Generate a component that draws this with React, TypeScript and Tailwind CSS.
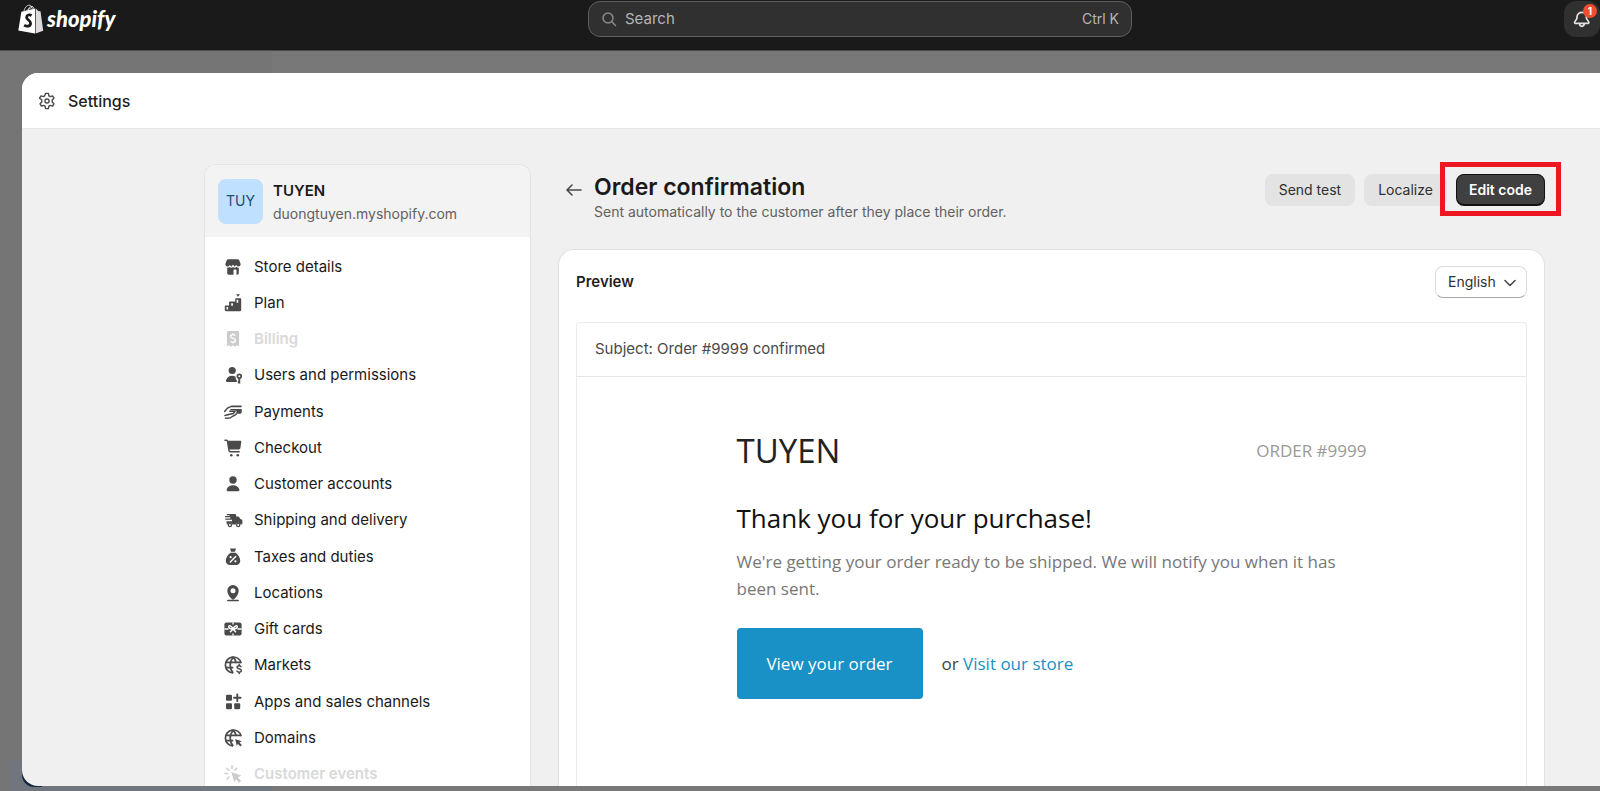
import React from 'react';

interface NavItem {
  label: string;
  icon: React.ReactNode;
  disabled?: boolean;
}

const Icon: React.FC<{ children: React.ReactNode }> = ({ children }) => (
  <svg viewBox="0 0 20 20" className="w-5 h-5 shrink-0" fill="currentColor" aria-hidden="true">
    {children}
  </svg>
);

const Globe = () => (
  <g fill="none" stroke="currentColor" strokeWidth="1.7">
    <path d="M18.2 8.2A8 8 0 1 0 10 18" />
    <path d="M10.600 2c-2.200 2.200-3.400 5-3.400 8s1 5.800 3 8M10 2c2 1.800 3 3.900 3.300 6.200" />
    <path d="M2.700 7.300h15M2.700 12.700h7.600" />
  </g>
);

const navItems: NavItem[] = [
  {
    label: 'Store details',
    icon: (
      <Icon>
        <path d="M5.200 2.300h9.600c.6 0 1.100.3 1.300.8l1.400 3.400c.5 1.400-.3 3-2 3-1.100 0-1.800-.6-2.200-1.400-.5 0-1 1.400-1.700 1.400S10.500 7.800 10 7.800s-.8 1.700-1.600 1.700S7.200 8 6.700 8c-.4.900-1.100 1.500-2.200 1.500-1.700 0-2.500-1.600-2-3l1.400-3.400c.2-.5.7-.8 1.300-.8z" />
        <path d="M4.200 10.700c1 0 1.900-.3 2.500-.8.800 1 2.500 1 3.300 0 .8 1 2.500 1 3.300 0 .6.5 1.500.8 2.500.8v5.600c0 .8-.6 1.400-1.400 1.400h-.9v-4.200c0-.5-.4-.9-.9-.9h-1.200c-.5 0-.9.400-.9.900v4.200H5.600c-.8 0-1.400-.6-1.400-1.400z" />
      </Icon>
    ),
  },
  {
    label: 'Plan',
    icon: (
      <Icon>
        <path d="M13 1.200h4l-2 2.600z" />
        <path
          fillRule="evenodd"
          d="M13.200 5.200h4c.6 0 1 .4 1 1v10.800c0 .7-.5 1.200-1.200 1.200H3c-.7 0-1.200-.5-1.200-1.200v-3.600c0-.6.4-1 1-1h3.300v-2.800c0-.6.4-1 1-1h5.100V6.200c0-.6.4-1 1-1zM3.500 13.900v2.500h1.600v-2.500zM8.200 10.300v2.500h1.700v-2.500zM13.600 6.800v3h1.700v-3z"
        />
      </Icon>
    ),
  },
  {
    label: 'Billing',
    disabled: true,
    icon: (
      <Icon>
        <path d="M5.500 2h9c.9 0 1.600.7 1.600 1.600v14l-2-1.400-2 1.600-2.100-1.600-2.100 1.600-2-1.600-2 1.400v-14C3.900 2.700 4.600 2 5.500 2z" />
        <path
          d="M12.300 6.600c-.5-.7-1.400-1-2.300-1-1.300 0-2.400.7-2.400 1.900 0 2.700 4.800 1.100 4.800 3.700 0 1.300-1.100 2-2.400 2-1 0-2-.4-2.500-1.200M10 4.200v1.400M10 13.200v1.400"
          fill="none"
          stroke="#fff"
          strokeWidth="1.400"
        />
      </Icon>
    ),
  },
  {
    label: 'Users and permissions',
    icon: (
      <Icon>
        <circle cx="9.200" cy="5.500" r="3.600" />
        <path d="M9 10.700c1.500 0 2.700.4 3.600 1-.1 1.600.3 2.800 1.300 3.600v1.700H4.200c-.9 0-1.500-.8-1.200-1.700.9-2.700 3.200-4.600 6-4.600z" />
        <circle cx="16.300" cy="11.300" r="1.900" fill="none" stroke="currentColor" strokeWidth="1.700" />
        <path d="M16.300 13v5.500M16.300 17.300h-1.500" fill="none" stroke="currentColor" strokeWidth="1.900" />
      </Icon>
    ),
  },
  {
    label: 'Payments',
    icon: (
      <Icon>
        <path d="M8.400 3.500h10.200v1.700H6.700c.4-.9 1-1.700 1.700-1.700zM7.500 6.900h11.200v3.200c0 .9-.7 1.600-1.600 1.600h-4.700l1-1.400c.6-1-.1-2.100-1.300-2H7.200z" />
        <path
          d="M1.700 9.500C3 7.500 4.500 5.300 6.700 5.200M6.800 9.300l5.300-.2-1.800 2.400-3.500.8-4.800 1.100M2.600 16.300c3.600.4 5.200-.2 7.500-2.300l3.100-1.700"
          fill="none"
          stroke="currentColor"
          strokeWidth="1.500"
          strokeLinecap="round"
        />
      </Icon>
    ),
  },
  {
    label: 'Checkout',
    icon: (
      <Icon>
        <path d="M4.200 2.800h13c.7 0 1.200.6 1.100 1.300l-.9 6c-.1.800-.7 1.300-1.500 1.300H6.300z" />
        <path d="M2 2.300h1.500c.6 0 .9.400 1 .9l1.500 9.200c.1.900.7 1.400 1.500 1.400h8.700" fill="none" stroke="currentColor" strokeWidth="1.500" strokeLinecap="round" />
        <circle cx="8.300" cy="17.200" r="1.300" />
        <circle cx="14.800" cy="17.200" r="1.300" />
      </Icon>
    ),
  },
  {
    label: 'Customer accounts',
    icon: (
      <Icon>
        <circle cx="10" cy="6" r="3.700" />
        <path d="M10 11.200c3 0 5.300 1.400 6.300 4 .4 1-.4 2.100-1.500 2.100H5.200c-1.100 0-1.900-1.100-1.500-2.100 1-2.600 3.300-4 6.300-4z" />
      </Icon>
    ),
  },
  {
    label: 'Shipping and delivery',
    icon: (
      <Icon>
        <path d="M4.300 4h7.500c.8 0 1.400.6 1.400 1.400v1h1.700c.6 0 1.100.3 1.400.8l1 1.700 1.400.7c.5.300.7.700.7 1.200v2.500c0 .7-.6 1.300-1.300 1.300h-.5a2.500 2.500 0 0 0-4.800 0H9.300a2.500 2.500 0 0 0-4.800 0h-.6l-.5-3.400H9V9.700H2.300V8.500h5V7.200H2V6h4.600V5.200H3.800C3.400 4.800 3.700 4 4.300 4z" />
        <circle cx="6.900" cy="15" r="1.600" fill="none" stroke="currentColor" strokeWidth="1.300" />
        <circle cx="15.200" cy="15" r="1.600" fill="none" stroke="currentColor" strokeWidth="1.300" />
      </Icon>
    ),
  },
  {
    label: 'Taxes and duties',
    icon: (
      <Icon>
        <path d="M7 1.500h6l-.8 2.200v1.100H7.800V3.700z" />
        <path d="M7.300 5.700h5.400c2.500 1.900 4.500 5 4.500 8.100 0 3-2.400 4.300-4.400 4.300H7.200c-2 0-4.400-1.300-4.400-4.300 0-3.100 2-6.200 4.500-8.100z" />
        <path d="M7.300 15l5.400-5.600" stroke="#fff" strokeWidth="1.400" strokeLinecap="round" />
        <circle cx="7.600" cy="10.200" r="1.100" fill="#fff" />
        <circle cx="12.400" cy="14.300" r="1.100" fill="#fff" />
      </Icon>
    ),
  },
  {
    label: 'Locations',
    icon: (
      <Icon>
        <path fillRule="evenodd" d="M10 2a5.700 5.700 0 0 1 5.700 5.700c0 3.600-2.500 6.300-4.500 8.300-.7.700-1.700.7-2.400 0-2-2-4.500-4.700-4.500-8.300A5.700 5.700 0 0 1 10 2zm0 3.200a2.500 2.500 0 1 0 0 5 2.500 2.500 0 0 0 0-5z" />
        <path d="M4.800 17.600h10.400" stroke="currentColor" strokeWidth="1.500" strokeLinecap="round" />
      </Icon>
    ),
  },
  {
    label: 'Gift cards',
    icon: (
      <Icon>
        <path d="M3.500 3.500h13c1.200 0 2.100.8 2.100 2v9c0 1.200-.9 2-2.100 2h-13c-1.200 0-2.100-.8-2.100-2v-9c0-1.200.9-2 2.100-2z" />
        <path d="M1.500 10h4M14.500 10h4M10 3.500v2M10 14.500v2" stroke="#fff" strokeWidth="1.300" />
        <path
          d="M10 9.800C8.500 6.600 5.800 6 5.700 7.700c0 1.500 2.300 2.100 4.300 2.100 2 0 4.300-.6 4.300-2.100-.1-1.700-2.800-1.100-4.300 2.100zM9.700 10.200l-2.600 3M10.300 10.200l2.600 3"
          fill="none"
          stroke="#fff"
          strokeWidth="1.500"
        />
      </Icon>
    ),
  },
  {
    label: 'Markets',
    icon: (
      <Icon>
        <Globe />
        <path
          d="M18 11.600c-.4-.6-1.100-.9-1.900-.9-1.200 0-2 .6-2 1.500 0 2.200 4.200 1.100 4.200 3.300 0 1-.9 1.700-2.100 1.700-1 0-1.800-.4-2.200-1.100M16.200 9.300v1.400M16.200 17.200v1.400"
          fill="none"
          stroke="currentColor"
          strokeWidth="1.500"
          strokeLinecap="round"
        />
      </Icon>
    ),
  },
  {
    label: 'Apps and sales channels',
    icon: (
      <Icon>
        <rect x="3" y="2.800" width="6" height="6" rx="1.100" />
        <rect x="3" y="11.200" width="6" height="6" rx="1.100" />
        <rect x="11.200" y="11.200" width="6" height="6" rx="1.100" />
        <path d="M14.300 2.500v6.600M11 5.800h6.600" stroke="currentColor" strokeWidth="1.900" strokeLinecap="round" />
      </Icon>
    ),
  },
  {
    label: 'Domains',
    icon: (
      <Icon>
        <Globe />
        <path d="M12.200 11l6.500 2.200-2.300 1.200 2.400 2.700-1.500 1.400-2.400-2.700-1.100 2.300z" />
      </Icon>
    ),
  },
  {
    label: 'Customer events',
    disabled: true,
    icon: (
      <Icon>
        <path d="M8.300 8l10 3.500-3.500 2 3.300 3.500-2 1.800-3.200-3.500-1.500 3.200z" />
        <path d="M9 1.800v2.700M3.800 4.200l2 2M2 9.500h2.700M4 15l2-2M13.800 4.200l-1.900 2" stroke="currentColor" strokeWidth="1.500" strokeLinecap="round" />
      </Icon>
    ),
  },
];

const Logo: React.FC = () => (
  <a href="#home" aria-label="Shopify" className="flex items-center gap-[3px] text-white">
    <svg viewBox="0 0 26 30" className="w-[26px] h-[30px]" aria-hidden="true">
      <path d="M3.400 7.700L17.200 4.400 17 29.600.3 26.500z" fill="#fff" />
      <path d="M17.900 4.600l2.300 2.300 2.300.3 2.700 19.600-7.600 2.600z" fill="#dcdcdc" />
      <path
        d="M5.800 8.500C6.200 4 8.700 1.200 11.300 1.200c2.100 0 3.100 2.500 3.100 5M9.700 7.500c.5-3.600 2.500-5.400 4.300-5.200 1.300.2 1.900 1.700 2.100 3.200M7.800 7.200l6-4"
        fill="none"
        stroke="#d4d4d4"
        strokeWidth="1"
      />
      <path
        d="M13.600 11.400c-2.200-1.200-4.900-.4-5 1.900-.1 2.600 4.200 2.900 4 6-.2 3-3.700 3.800-6.400 1.800"
        fill="none"
        stroke="#1a1a1a"
        strokeWidth="2.800"
      />
    </svg>
    <span className="font-['Lato',sans-serif] text-[22px] leading-8 font-black italic">shopify</span>
  </a>
);

const TopBar: React.FC = () => (
  <header className="relative h-[51px] shrink-0 flex items-start bg-[#1a1a1a] border-b border-[#4a4a4a] pl-[18px]">
    <div className="w-[570px] shrink-0 pt-[3px]">
      <Logo />
    </div>
    <label className="flex-1 min-w-0 h-9 mt-px flex items-center gap-2 rounded-xl border border-[#5e5e5e] bg-[#303030] px-3 text-[15px] text-[#b5b5b5]">
      <svg viewBox="0 0 16 16" className="w-4 h-4 text-[#8a8a8a]" fill="none" stroke="currentColor" strokeWidth="1.500" strokeLinecap="round" aria-hidden="true">
        <circle cx="7" cy="7" r="5" />
        <path d="M10.800 10.800l3.700 3.700" />
      </svg>
      <input
        type="text"
        aria-label="Search"
        placeholder="Search"
        className="flex-1 min-w-0 bg-transparent outline-none placeholder:text-[#b5b5b5]"
      />
      <kbd className="font-[Inter,sans-serif] text-sm">Ctrl K</kbd>
    </label>
    <div className="w-[468px] shrink-0 flex justify-end">
      <button type="button" aria-label="Notifications" className="relative w-9 h-9 mt-px rounded-xl bg-[#303030] text-[#e3e3e3] flex items-center justify-center">
        <svg viewBox="0 0 20 20" className="w-5 h-5" fill="none" stroke="currentColor" strokeWidth="1.700" strokeLinejoin="round" aria-hidden="true">
          <path d="M10 3.300c2.500 0 4.300 1.900 4.400 4.300l.1 2 2.200 3.300c.5.700 0 1.500-.8 1.500H3.500c-.8 0-1.300-.8-.8-1.500l2.200-3.300.1-2c.2-2.400 2.300-4.300 5-4.300z" />
          <path d="M7.600 14.600c0 3.600 4.600 3.600 4.600 0" />
        </svg>
        <span className="absolute top-[3px] right-[3px] w-[14px] h-[14px] rounded-full bg-[#ef4d2f] text-white text-[10px] leading-[14px] font-bold text-center">1</span>
      </button>
    </div>
  </header>
);

const Sidebar: React.FC = () => (
  <aside className="w-[327px] shrink-0 rounded-t-xl border border-b-0 border-[#e3e3e3] bg-white overflow-hidden">
    <div className="flex items-center gap-[10px] bg-[#f3f3f3] h-[72px] px-[13px]">
      <div className="w-[45px] h-[45px] rounded-lg bg-[#bfe0ff] text-[#1d4e73] text-sm flex items-center justify-center">TUY</div>
      <div className="pt-px">
        <p className="text-[15px] leading-6 font-semibold text-[#1a1a1a]">TUYEN</p>
        <p className="text-sm leading-[22px] text-[#616161]">duongtuyen.myshopify.com</p>
      </div>
    </div>
    <nav className="pt-3 px-[18px]">
      <ul>
        {navItems.map((item) => (
          <li key={item.label} className="nth-[4n]:mb-px">
            <a
              href="#settings"
              aria-disabled={item.disabled}
              className={`flex items-center gap-[11px] h-9 text-[15px] ${
                item.disabled ? 'text-[#cccccc] font-semibold' : 'text-[#4a4a4a]'
              }`}
            >
              {item.icon}
              <span className={item.disabled ? 'text-[#d9d9d9]' : 'text-[#1a1a1a]'}>{item.label}</span>
            </a>
          </li>
        ))}
      </ul>
    </nav>
  </aside>
);

const PageHeader: React.FC = () => (
  <div className="flex items-start gap-3 pt-[9px] pl-2">
    <button type="button" aria-label="Back" className="mt-[7px] text-[#4a4a4a]">
      <svg viewBox="0 0 16 20" className="w-4 h-5" fill="none" stroke="currentColor" strokeWidth="1.600" strokeLinecap="round" strokeLinejoin="round" aria-hidden="true">
        <path d="M15 10H1M6 5l-5 5 5 5" />
      </svg>
    </button>
    <div className="flex-1">
      <h1 className="text-[23px] leading-7 font-semibold text-[#1a1a1a]">Order confirmation</h1>
      <p className="text-sm leading-[22px] text-[#616161]">Sent automatically to the customer after they place their order.</p>
    </div>
    <div className="flex gap-[9px] pt-px text-sm">
      <button type="button" className="h-8 px-[14px] rounded-lg bg-[#e3e3e3] text-[#303030]">Send test</button>
      <button type="button" className="h-8 px-[14px] rounded-lg bg-[#e3e3e3] text-[#303030]">Localize</button>
      <div className="relative">
        <button type="button" className="h-8 px-3 rounded-lg border border-b-2 border-[#111111] bg-[#404040] text-white font-semibold">
          Edit code
        </button>
        <div className="absolute -top-3 -bottom-[10px] -left-4 -right-4 border-[5px] border-[#ee1620] pointer-events-none" />
      </div>
    </div>
  </div>
);

const EmailPreview: React.FC = () => (
  <div className="flex-1 rounded-t border border-b-0 border-[#ebebeb]">
    <p className="h-[54px] flex items-center px-[18px] border-b border-[#e6e6e6] text-[15px] text-[#4a4a4a]">
      Subject: Order #9999 confirmed
    </p>
    <div className="w-[630px] mx-auto pt-[50px] font-['Open_Sans',sans-serif]">
      <div className="flex items-center justify-between">
        <h2 className="text-[33px] leading-[47px] text-[#222222]">TUYEN</h2>
        <span className="text-[17px] text-[#999999]">ORDER #9999</span>
      </div>
      <h3 className="mt-6 text-[26px] leading-10 text-[#111111]">Thank you for your purchase!</h3>
      <p className="mt-[10px] text-[17px] leading-[27px] text-[#777777]">
        We're getting your order ready to be shipped. We will notify you when it has been sent.
      </p>
      <div className="mt-[26px] flex items-center gap-[19px] text-[17px] text-[#444444]">
        <a href="#order" className="w-[186px] h-[71px] rounded bg-[#1990c6] text-white flex items-center justify-center">
          View your order
        </a>
        <p>
          or <a href="#store" className="text-[#1990c6]">Visit our store</a>
        </p>
      </div>
    </div>
  </div>
);

export default function App() {
  return (
    <div className="relative h-screen flex flex-col overflow-hidden bg-[#787878] font-[Inter,sans-serif] antialiased">
      {/* dimmed admin page behind the settings sheet */}
      <div className="absolute left-0 top-0 bottom-0 w-[272px] bg-[#757575]">
        <div className="absolute left-[9px] right-0 bottom-0 h-8 rounded-tl-lg bg-[#70757e]" />
        <div className="absolute left-[22px] bottom-1 w-5 h-5 rounded-bl-xl bg-[#12293d]" />
      </div>

      <TopBar />

      <div className="relative flex-1 min-h-0 mt-[22px] mb-[5px] ml-[22px] flex flex-col rounded-l-2xl bg-[#f0f0f0] overflow-hidden">
        <div className="h-14 shrink-0 flex items-center gap-3 pl-4 bg-white border-b border-[#e8e8e8]">
          <svg viewBox="0 0 20 20" className="w-[18px] h-[18px] text-[#4a4a4a]" fill="none" stroke="currentColor" strokeWidth="1.600" strokeLinejoin="round" aria-hidden="true">
            <path d="M8.500 1.500h3l.6 2.700 1.500.9 2.600-.8 1.500 2.600-1.900 1.900v2.400l1.900 1.900-1.500 2.600-2.600-.8-1.500.9-.6 2.700h-3l-.6-2.700-1.500-.9-2.600.8-1.500-2.600 1.900-1.900V8.800L1.800 6.900l1.500-2.600 2.600.8 1.500-.9z" />
            <circle cx="10" cy="10" r="2.300" />
          </svg>
          <span className="text-base font-medium text-[#1f1f1f]">Settings</span>
        </div>

        <div className="flex-1 min-h-0 flex gap-[27px] pt-[35px] pl-[182px] pr-[55px]">
          <Sidebar />
          <main className="flex-1 min-w-0 flex flex-col">
            <PageHeader />
            <section className="mt-[26px] flex-1 flex flex-col rounded-t-2xl border border-b-0 border-[#e0e0e0] bg-white px-[17px] pt-4">
              <div className="mb-6 flex items-center justify-between">
                <h2 className="text-[15px] font-semibold text-[#1f1f1f]">Preview</h2>
                <div className="relative">
                  <select
                    aria-label="Language"
                    className="w-[92px] h-8 appearance-none rounded-lg border border-[#dddddd] border-b-[#a8a8a8] bg-white pl-3 text-sm text-[#303030]"
                  >
                    <option>English</option>
                  </select>
                  <svg viewBox="0 0 12 8" className="absolute right-[11px] top-[13px] w-3 h-2 text-[#4a4a4a] pointer-events-none" fill="none" stroke="currentColor" strokeWidth="1.600" strokeLinecap="round" strokeLinejoin="round" aria-hidden="true">
                    <path d="M1 1.500l5 5 5-5" />
                  </svg>
                </div>
              </div>
              <EmailPreview />
            </section>
          </main>
        </div>
      </div>
    </div>
  );
}
